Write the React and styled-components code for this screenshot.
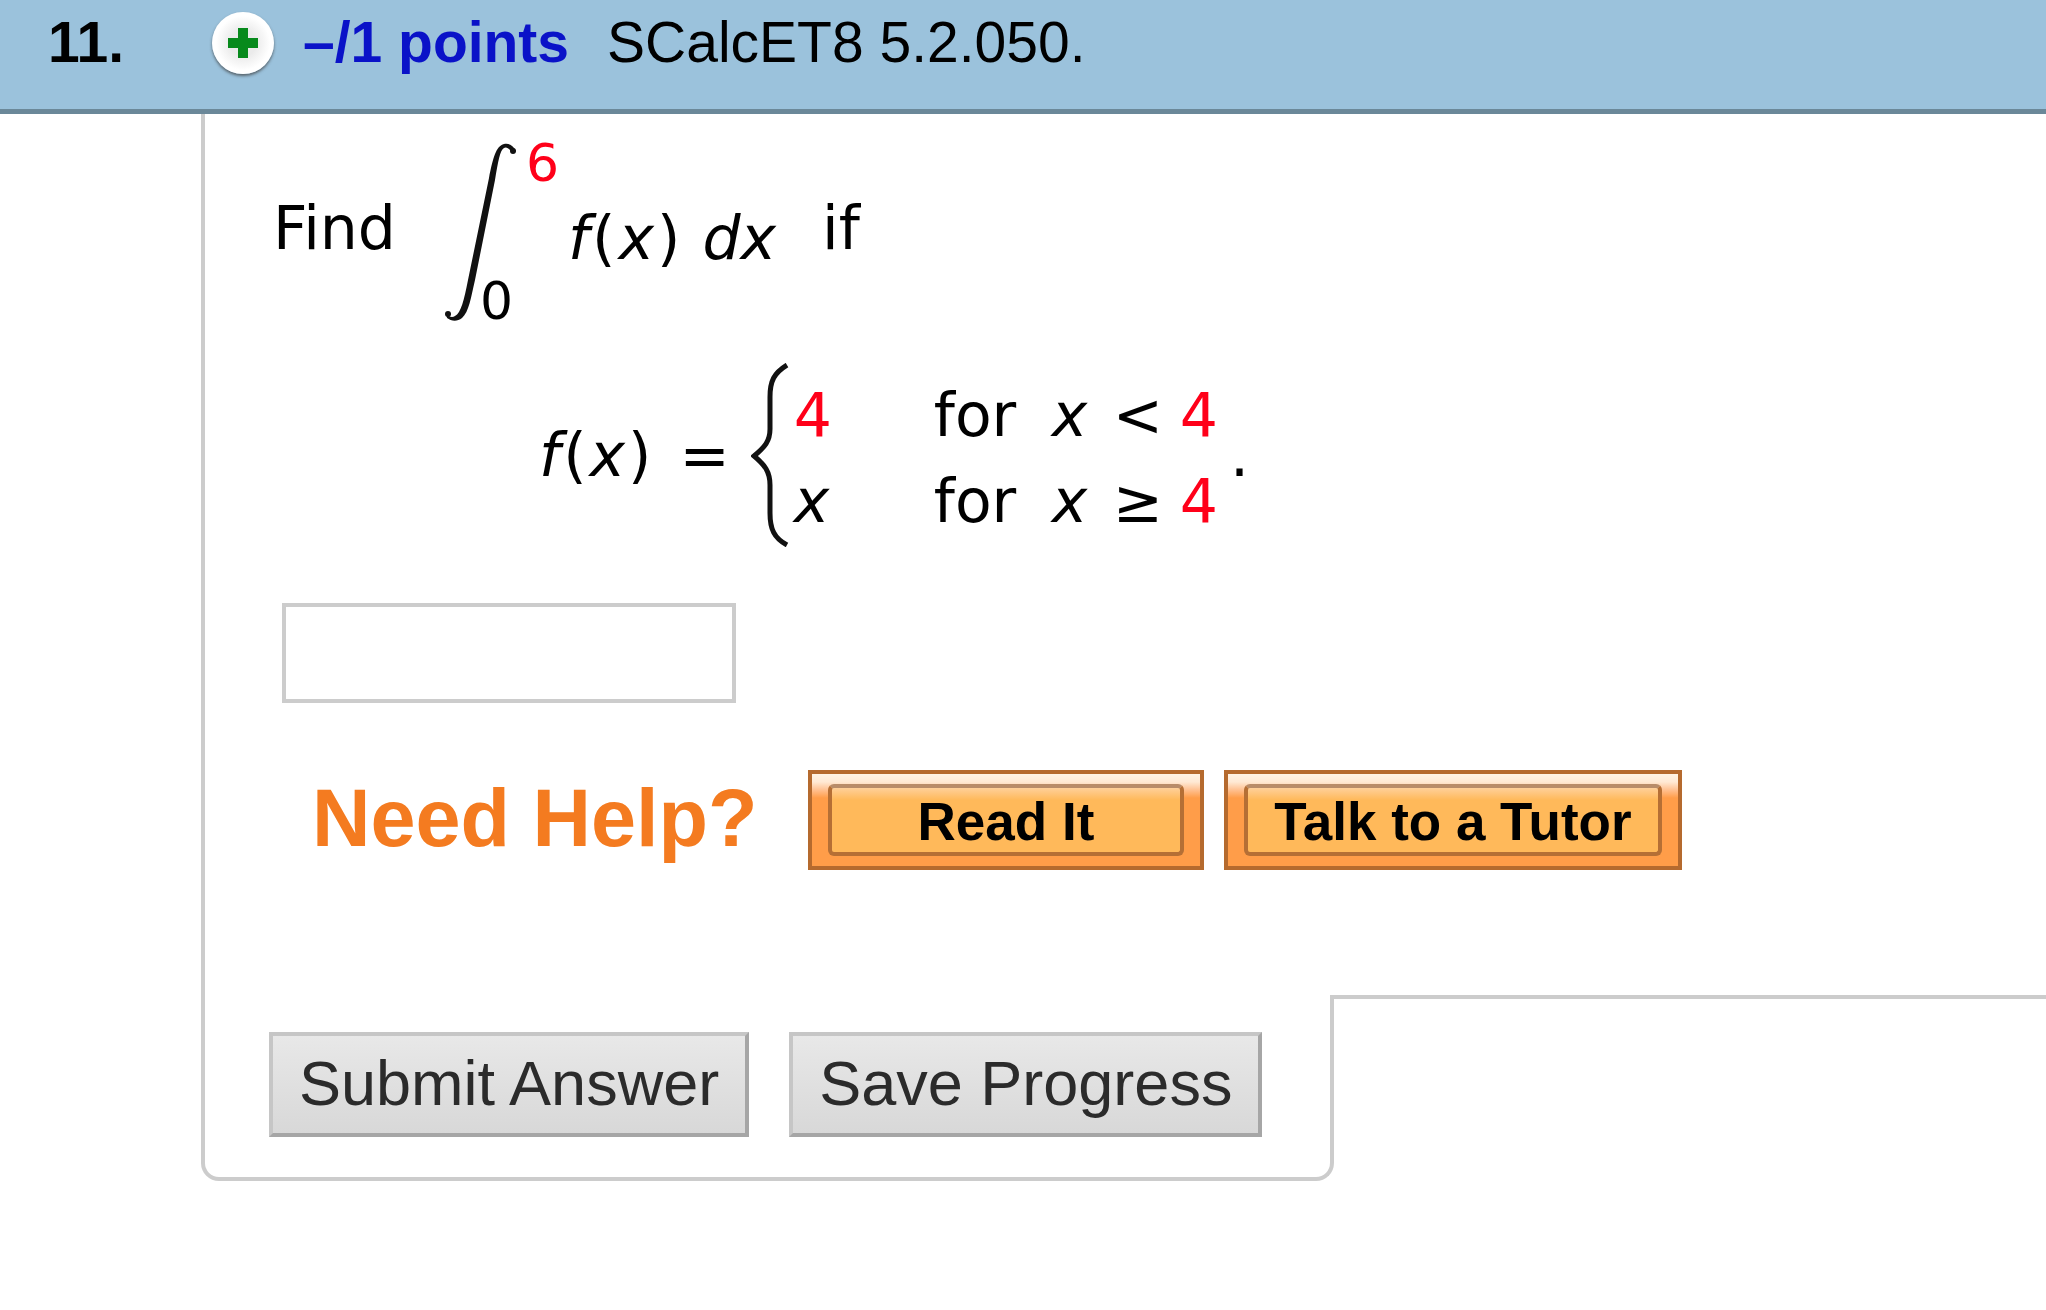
import styled, { createGlobalStyle } from "styled-components";

const GlobalStyle = createGlobalStyle`
  body {
    margin: 0;
    background: #fff;
    color: #000;
  }

  *, *::before, *::after {
    box-sizing: border-box;
  }
`;

const Header = styled.header`
  display: flex;
  align-items: center;
  padding: 0 48px 24px;
  border-bottom: 5px solid #6b8899;
  background: #9bc2dc;
  font-family: "Liberation Sans", Arial, sans-serif;
  font-size: 57px;
  line-height: 85px;
  white-space: nowrap;
`;

const Number = styled.span`
  min-width: 164px;
  font-weight: bold;
`;

const ExpandButton = styled.button`
  display: flex;
  align-items: center;
  justify-content: center;
  width: 62px;
  height: 62px;
  padding: 0;
  border: 0;
  border-radius: 50%;
  background: radial-gradient(circle, #ebebeb 30%, #fff 62%);
  box-shadow: 0 2px 3px rgba(60, 60, 60, 0.7);
  cursor: pointer;
`;

const Points = styled.a`
  margin: 0 38px 0 29px;
  color: #0a12c8;
  font-weight: bold;
  text-decoration: none;
`;

const Question = styled.main`
  margin-left: 201px;
`;

const Content = styled.section`
  padding: 29px 40px 125px 68px;
  border-left: 4px solid #ccc;
  font-family: "DejaVu Sans", sans-serif;
  font-size: 60px;
  line-height: 60px;
  white-space: nowrap;
`;

const Prompt = styled.div`
  display: flex;
  align-items: flex-start;
`;

const Word = styled.span`
  padding-top: 55px;
`;

const Integral = styled.span`
  display: flex;
  margin: 0 46px 0 48px;
`;

const Limits = styled.span`
  display: flex;
  flex-direction: column;
  justify-content: space-between;
  width: 88px;
  margin-left: -38px;
  font-size: 52px;
  line-height: 40px;
`;

const Upper = styled.span`
  padding-left: 46px;
  color: #ff0019;
`;

const Integrand = styled.span`
  padding-top: 65px;
`;

const Paren = styled.span`
  padding: 0 3px;
`;

const Red = styled.span`
  color: #ff0019;
`;

const Definition = styled.div`
  display: flex;
  align-items: center;
  margin: 42px 0 56px 266px;
`;

const Equals = styled.span`
  margin: 0 21px 0 25px;
`;

const Cases = styled.div`
  display: grid;
  grid-template-columns: 140px 118px 61px 67px auto;
  margin: 0 12px 0 5px;
  padding-top: 6px;
  line-height: 86px;
`;

const Answer = styled.input`
  display: block;
  width: 454px;
  height: 100px;
  margin-left: 9px;
  padding: 0 16px;
  border: 4px solid #ccc;
  background: #fff;
  font: inherit;
`;

const Help = styled.div`
  display: flex;
  align-items: center;
  gap: 20px;
  margin: 67px 0 0 39px;
  font-family: "Liberation Sans", Arial, sans-serif;
  font-weight: bold;
`;

const HelpTitle = styled.span`
  margin-right: 30px;
  padding-bottom: 4px;
  color: #f47b20;
  font-size: 81px;
  line-height: 96px;
`;

const HelpButton = styled.button`
  padding: 10px 16px;
  border: 4px solid #b56a2e;
  background: linear-gradient(#fff3e4 0, #ffe9d4 8px, #ffc090 16px, #ff9d49 24px);
  color: #000;
  font: inherit;
  font-size: 53px;
  cursor: pointer;

  span {
    display: block;
    padding: 4px ${(props) => props.$pad}px 0;
    border: 4px solid #b56f35;
    border-top-color: #b98c69;
    border-radius: 6px;
    background: linear-gradient(#ffd09a 0, #ffb95a 12px);
    line-height: 60px;
  }
`;

const Footer = styled.footer`
  display: flex;

  &::after {
    content: "";
    flex: 1;
    border-top: 4px solid #ccc;
  }
`;

const Actions = styled.div`
  display: flex;
  gap: 40px;
  padding: 37px 68px 40px 64px;
  border: 4px solid #ccc;
  border-top: 0;
  border-radius: 0 0 18px 18px;
`;

const ActionButton = styled.button`
  height: 105px;
  padding: 0 26px 4px;
  border: 4px solid;
  border-color: #c6c6c6 #a6a6a6 #a6a6a6 #c6c6c6;
  background: linear-gradient(#e8e8e8, #d8d8d8);
  color: #2b2b2b;
  font-family: "Liberation Sans", Arial, sans-serif;
  font-size: 63px;
  white-space: nowrap;
  cursor: pointer;
`;

function PlusIcon() {
  return (
    <svg width="30" height="30" viewBox="0 0 30 30" aria-hidden="true">
      <path d="M10 0h10v10h10v10H20v10H10V20H0V10h10z" fill="#078a1c" />
    </svg>
  );
}

function IntegralSign() {
  return (
    <svg width="74" height="178" viewBox="0 0 74 178" aria-hidden="true">
      <path
        d="M72 8C69 2 65 0 60 1C52 3 49 15 45 35L24 137C20 157 17 170 11 173C8 175 5 174 2 170L3 175C7 178 13 179 18 175C25 169 27 154 31 137L51 37C54 19 56 7 60 5C63 3 66 7 69 10Z"
        fill="#111"
      />
      <circle cx="69" cy="8" r="3" fill="#111" />
      <circle cx="4" cy="171" r="3" fill="#111" />
    </svg>
  );
}

function Brace() {
  return (
    <svg width="38" height="184" viewBox="0 0 38 184" aria-hidden="true">
      <path
        d="M36 2C23 10 19 18 19 34V66C19 78 14 84 3 93C14 102 19 109 19 122V150C19 166 23 175 36 182"
        fill="none"
        stroke="#111"
        strokeWidth="5"
      />
    </svg>
  );
}

function FofX() {
  return (
    <>
      <i>f</i>
      <Paren>(</Paren>
      <i>x</i>
      <Paren>)</Paren>
    </>
  );
}

function CaseRow({ value, sign }) {
  return (
    <>
      {value}
      <span>for</span>
      <i>x</i>
      <span>{sign}</span>
      <Red>4</Red>
    </>
  );
}

function App() {
  return (
    <>
      <GlobalStyle />
      <Header>
        <Number>11.</Number>
        <ExpandButton aria-label="Expand">
          <PlusIcon />
        </ExpandButton>
        <Points href="#points">–/1 points</Points>
        <span>SCalcET8 5.2.050.</span>
      </Header>
      <Question>
        <Content>
          <Prompt>
            <Word>Find</Word>
            <Integral>
              <IntegralSign />
              <Limits>
                <Upper>6</Upper>
                <span>0</span>
              </Limits>
              <Integrand>
                <FofX /> <i>dx</i>
              </Integrand>
            </Integral>
            <Word>if</Word>
          </Prompt>
          <Definition>
            <span>
              <FofX />
            </span>
            <Equals>=</Equals>
            <Brace />
            <Cases>
              <CaseRow value={<Red>4</Red>} sign="<" />
              <CaseRow value={<i>x</i>} sign="≥" />
            </Cases>
            <span>.</span>
          </Definition>
          <Answer type="text" aria-label="Answer" />
          <Help>
            <HelpTitle>Need Help?</HelpTitle>
            <HelpButton $pad={86}>
              <span>Read It</span>
            </HelpButton>
            <HelpButton $pad={26}>
              <span>Talk to a Tutor</span>
            </HelpButton>
          </Help>
        </Content>
        <Footer>
          <Actions>
            <ActionButton>Submit Answer</ActionButton>
            <ActionButton>Save Progress</ActionButton>
          </Actions>
        </Footer>
      </Question>
    </>
  );
}

export default App;
